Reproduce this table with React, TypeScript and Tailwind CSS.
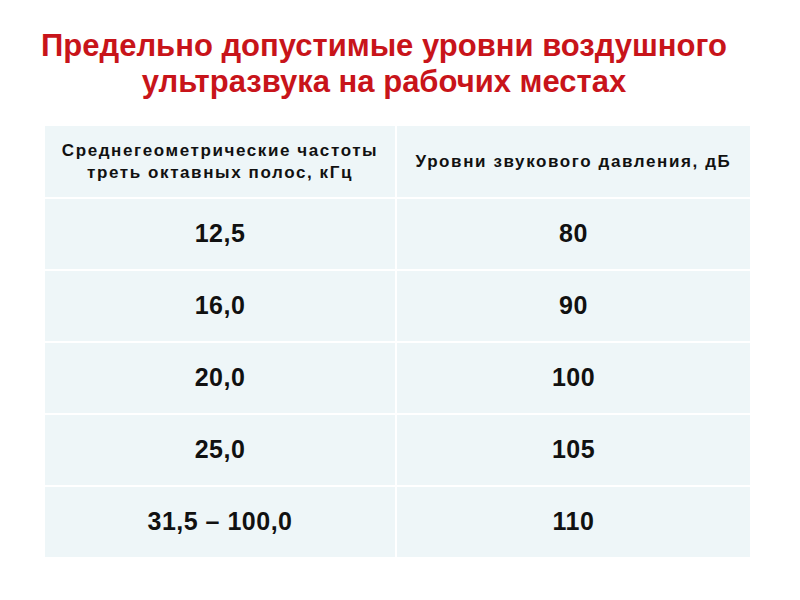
import React from "react";

const rows: [string, string][] = [
  ["12,5", "80"],
  ["16,0", "90"],
  ["20,0", "100"],
  ["25,0", "105"],
  ["31,5 – 100,0", "110"],
];

const App: React.FC = () => {
  return (
    <div className="w-[800px] h-[600px] bg-white overflow-hidden" style={{ fontFamily: '"Liberation Sans", Arial, sans-serif' }}>
      <h1 className="pt-[28px] pr-[32px] text-center text-[31px] leading-[36px] font-bold text-[#c8141a]">
        Предельно допустимые уровни воздушного
        <br />
        ультразвука на рабочих местах
      </h1>

      <div className="mt-[26px] ml-[45px] w-[705px] grid grid-cols-[350px_353px] gap-[2px] text-[#111]">
        <div className="h-[71px] bg-[#eef6f8] flex items-center justify-center text-center text-[17px] leading-[22px] font-bold tracking-[1.6px]">
          Среднегеометрические частоты
          <br />
          треть октавных полос, кГц
        </div>
        <div className="h-[71px] bg-[#eef6f8] flex items-center justify-center text-center text-[17px] font-bold tracking-[1.6px]">
          Уровни звукового давления, дБ
        </div>
        {rows.map(([f, l]) => (
          <React.Fragment key={f}>
            <div className="h-[70px] bg-[#eef6f8] flex items-center justify-center text-[25px] font-bold tracking-[0.5px]">{f}</div>
            <div className="h-[70px] bg-[#eef6f8] flex items-center justify-center text-[25px] font-bold tracking-[0.5px]">{l}</div>
          </React.Fragment>
        ))}
      </div>
    </div>
  );
};

export default App;
